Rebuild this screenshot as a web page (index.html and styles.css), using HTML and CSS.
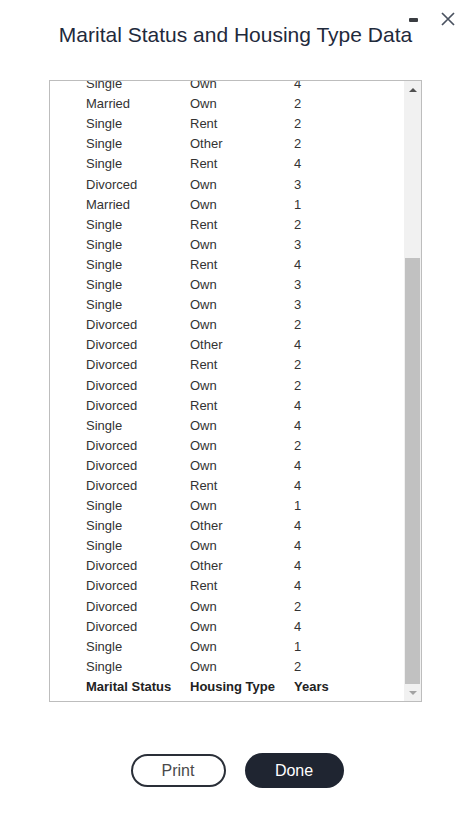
FILE: index.html
```html
<!DOCTYPE html>
<html>
<head>
<meta charset="utf-8">
<link rel="stylesheet" href="styles.css">
</head>
<body>
<div class="dialog">
  <div class="header">
    <h1 class="title">Marital Status and Housing Type Data</h1>
    <div class="controls">
      <span class="minimize"></span>
      <svg class="close" width="14" height="14" viewBox="0 0 14 14"><path d="M1 1 L13 13 M13 1 L1 13" stroke="#4a5260" stroke-width="1.7" fill="none"/></svg>
    </div>
  </div>
  <div class="tablebox">
    <div class="viewport">
      <div class="rows">
        <div class="row"><span>Single</span><span>Own</span><span>4</span></div>
        <div class="row"><span>Married</span><span>Own</span><span>2</span></div>
        <div class="row"><span>Single</span><span>Rent</span><span>2</span></div>
        <div class="row"><span>Single</span><span>Other</span><span>2</span></div>
        <div class="row"><span>Single</span><span>Rent</span><span>4</span></div>
        <div class="row"><span>Divorced</span><span>Own</span><span>3</span></div>
        <div class="row"><span>Married</span><span>Own</span><span>1</span></div>
        <div class="row"><span>Single</span><span>Rent</span><span>2</span></div>
        <div class="row"><span>Single</span><span>Own</span><span>3</span></div>
        <div class="row"><span>Single</span><span>Rent</span><span>4</span></div>
        <div class="row"><span>Single</span><span>Own</span><span>3</span></div>
        <div class="row"><span>Single</span><span>Own</span><span>3</span></div>
        <div class="row"><span>Divorced</span><span>Own</span><span>2</span></div>
        <div class="row"><span>Divorced</span><span>Other</span><span>4</span></div>
        <div class="row"><span>Divorced</span><span>Rent</span><span>2</span></div>
        <div class="row"><span>Divorced</span><span>Own</span><span>2</span></div>
        <div class="row"><span>Divorced</span><span>Rent</span><span>4</span></div>
        <div class="row"><span>Single</span><span>Own</span><span>4</span></div>
        <div class="row"><span>Divorced</span><span>Own</span><span>2</span></div>
        <div class="row"><span>Divorced</span><span>Own</span><span>4</span></div>
        <div class="row"><span>Divorced</span><span>Rent</span><span>4</span></div>
        <div class="row"><span>Single</span><span>Own</span><span>1</span></div>
        <div class="row"><span>Single</span><span>Other</span><span>4</span></div>
        <div class="row"><span>Single</span><span>Own</span><span>4</span></div>
        <div class="row"><span>Divorced</span><span>Other</span><span>4</span></div>
        <div class="row"><span>Divorced</span><span>Rent</span><span>4</span></div>
        <div class="row"><span>Divorced</span><span>Own</span><span>2</span></div>
        <div class="row"><span>Divorced</span><span>Own</span><span>4</span></div>
        <div class="row"><span>Single</span><span>Own</span><span>1</span></div>
        <div class="row"><span>Single</span><span>Own</span><span>2</span></div>
        <div class="row head"><span>Marital Status</span><span>Housing Type</span><span>Years</span></div>
      </div>
    </div>
    <div class="scrollbar">
      <div class="arrow up"></div>
      <div class="track"><div class="thumb"></div></div>
      <div class="arrow down"></div>
    </div>
  </div>
  <div class="buttons">
    <button class="btn print">Print</button>
    <button class="btn done">Done</button>
  </div>
</div>
</body>
</html>
```
FILE: styles.css
```css
html, body {
  margin: 0;
  padding: 0;
  background: #fff;
  font-family: "Liberation Sans", Arial, sans-serif;
}
.dialog {
  width: 471px;
  height: 814px;
  position: relative;
}
.header {
  height: 80px;
  display: flex;
  justify-content: center;
}
.title {
  margin: 22px 0 0 0;
  font-size: 21px;
  font-weight: normal;
  color: #1f2a3c;
  line-height: 26px;
  height: 26px;
}
.controls {
  position: absolute;
  top: 12px;
  left: 409px;
  display: flex;
  align-items: flex-start;
  gap: 23px;
}
.minimize {
  display: block;
  flex-shrink: 0;
  width: 9px;
  height: 4px;
  margin-top: 6px;
  background: #3a3d42;
  border-radius: 1px;
}
.close {
  display: block;
  flex-shrink: 0;
}
.tablebox {
  margin-left: 49px;
  width: 371px;
  height: 620px;
  border: 1px solid #bdbdbd;
  display: flex;
}
.viewport {
  flex: 1;
  overflow: hidden;
  display: flex;
  flex-direction: column;
  justify-content: flex-end;
  padding-bottom: 4px;
}
.rows {
  display: flex;
  flex-direction: column;
  padding-left: 36px;
}
.row {
  display: grid;
  grid-template-columns: 104px 104px 60px;
  height: 20.1px;
  line-height: 20px;
  font-size: 13px;
  color: #333;
  flex-shrink: 0;
}
.row.head {
  font-weight: bold;
  color: #222;
}
.scrollbar {
  width: 17px;
  background: #f1f1f1;
  display: flex;
  flex-direction: column;
}
.arrow {
  height: 17px;
  display: flex;
  justify-content: center;
  align-items: center;
}
.arrow.up::before {
  content: "";
  border-left: 4px solid transparent;
  border-right: 4px solid transparent;
  border-bottom: 4px solid #505050;
}
.arrow.down::before {
  content: "";
  border-left: 4px solid transparent;
  border-right: 4px solid transparent;
  border-top: 4px solid #a3a3a3;
}
.track {
  flex: 1;
  display: flex;
  flex-direction: column;
  justify-content: flex-end;
}
.thumb {
  height: 426px;
  margin: 0 1px;
  background: #c1c1c1;
}
.buttons {
  display: flex;
  justify-content: center;
  gap: 19px;
  margin-top: 51px;
  padding-left: 3px;
  align-items: center;
}
.btn {
  font-family: "Liberation Sans", Arial, sans-serif;
  font-size: 16px;
  border-radius: 18px;
  cursor: pointer;
}
.print {
  width: 95px;
  height: 33px;
  background: #fff;
  border: 2px solid #2a2f38;
  color: #4a4a4a;
}
.done {
  width: 99px;
  height: 35px;
  background: #1f2531;
  border: none;
  color: #fff;
}
```
